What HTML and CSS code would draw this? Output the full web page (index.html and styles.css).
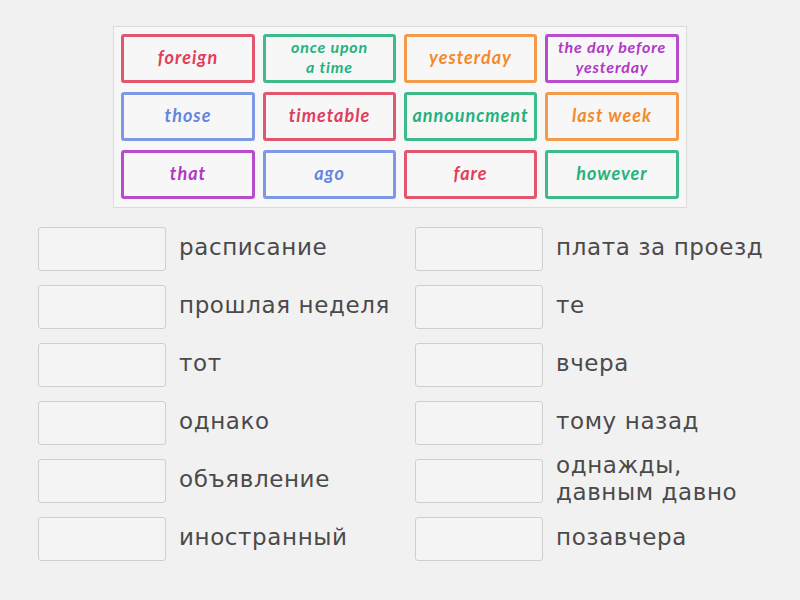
FILE: index.html
```html
<!DOCTYPE html>
<html lang="ru">
<head>
    <meta charset="UTF-8">
    <title>Match up</title>
    <link rel="stylesheet" href="styles.css">
</head>
<body>
    <div id="plansza">
        <div class="kafel czerwony">foreign</div>
        <div class="kafel zielony maly">once upon<br>a time</div>
        <div class="kafel pomarancz">yesterday</div>
        <div class="kafel fiolet maly">the day before<br>yesterday</div>
        <div class="kafel niebieski">those</div>
        <div class="kafel czerwony">timetable</div>
        <div class="kafel zielony">announcment</div>
        <div class="kafel pomarancz">last week</div>
        <div class="kafel fiolet">that</div>
        <div class="kafel niebieski">ago</div>
        <div class="kafel czerwony">fare</div>
        <div class="kafel zielony">however</div>
    </div>

    <div id="odpowiedzi">
        <div class="kolumna">
            <div class="wiersz"><div class="slot"></div><span class="opis">расписание</span></div>
            <div class="wiersz"><div class="slot"></div><span class="opis">прошлая неделя</span></div>
            <div class="wiersz"><div class="slot"></div><span class="opis">тот</span></div>
            <div class="wiersz"><div class="slot"></div><span class="opis">однако</span></div>
            <div class="wiersz"><div class="slot"></div><span class="opis">объявление</span></div>
            <div class="wiersz"><div class="slot"></div><span class="opis">иностранный</span></div>
        </div>
        <div class="kolumna">
            <div class="wiersz"><div class="slot"></div><span class="opis">плата за проезд</span></div>
            <div class="wiersz"><div class="slot"></div><span class="opis">те</span></div>
            <div class="wiersz"><div class="slot"></div><span class="opis">вчера</span></div>
            <div class="wiersz"><div class="slot"></div><span class="opis">тому назад</span></div>
            <div class="wiersz"><div class="slot"></div><span class="opis">однажды,<br>давным давно</span></div>
            <div class="wiersz"><div class="slot"></div><span class="opis">позавчера</span></div>
        </div>
    </div>
</body>
</html>
```
FILE: styles.css
```css
body {
    margin: 0;
    background: #f2f1f2;
    font-family: "Open Sans", sans-serif;
    width: 800px;
    height: 600px;
    overflow: hidden;
}
#plansza {
    margin: 26px 0 0 113px;
    width: 558px;
    padding: 7px 7px 8px 7px;
    background: #f7f7f7;
    border: 1px solid #dcdcdc;
    display: grid;
    grid-template-columns: 134px 133px 133px 134px;
    grid-auto-rows: 49px;
    column-gap: 8px;
    row-gap: 9px;
}
.kafel {
    border: 3px solid;
    border-radius: 3px;
    display: flex;
    align-items: center;
    justify-content: center;
    text-align: center;
    font-family: "Lato", sans-serif;
    font-style: italic;
    font-weight: bold;
    font-size: 18px;
    letter-spacing: 1px;
    line-height: 20px;
    padding-bottom: 3px;
    background: #f7f7f7;
}
.kafel.maly {
    font-size: 16px;
    letter-spacing: 0.8px;
}
.czerwony { color: #e03e5c; border-color: #e2566e; }
.zielony { color: #23b27c; border-color: #3dbb8a; }
.pomarancz { color: #f38a2c; border-color: #f49a4b; }
.fiolet { color: #b237c8; border-color: #b84ccc; }
.niebieski { color: #6386e0; border-color: #7d98e4; }
#odpowiedzi {
    display: grid;
    grid-template-columns: 377px 1fr;
    margin: 19px 0 0 38px;
}
.kolumna {
    display: flex;
    flex-direction: column;
    gap: 14px;
}
.wiersz {
    display: flex;
    align-items: center;
    height: 44px;
    gap: 13px;
}
.slot {
    width: 126px;
    height: 42px;
    flex-shrink: 0;
    border: 1px solid #cfcfcf;
    border-radius: 3px;
    background: #f5f4f5;
}
.opis {
    font-family: "DejaVu Sans", sans-serif;
    font-size: 23px;
    letter-spacing: 0.6px;
    line-height: 27px;
    margin-bottom: 4px;
    white-space: nowrap;
    color: #4a4a4a;
}
```
